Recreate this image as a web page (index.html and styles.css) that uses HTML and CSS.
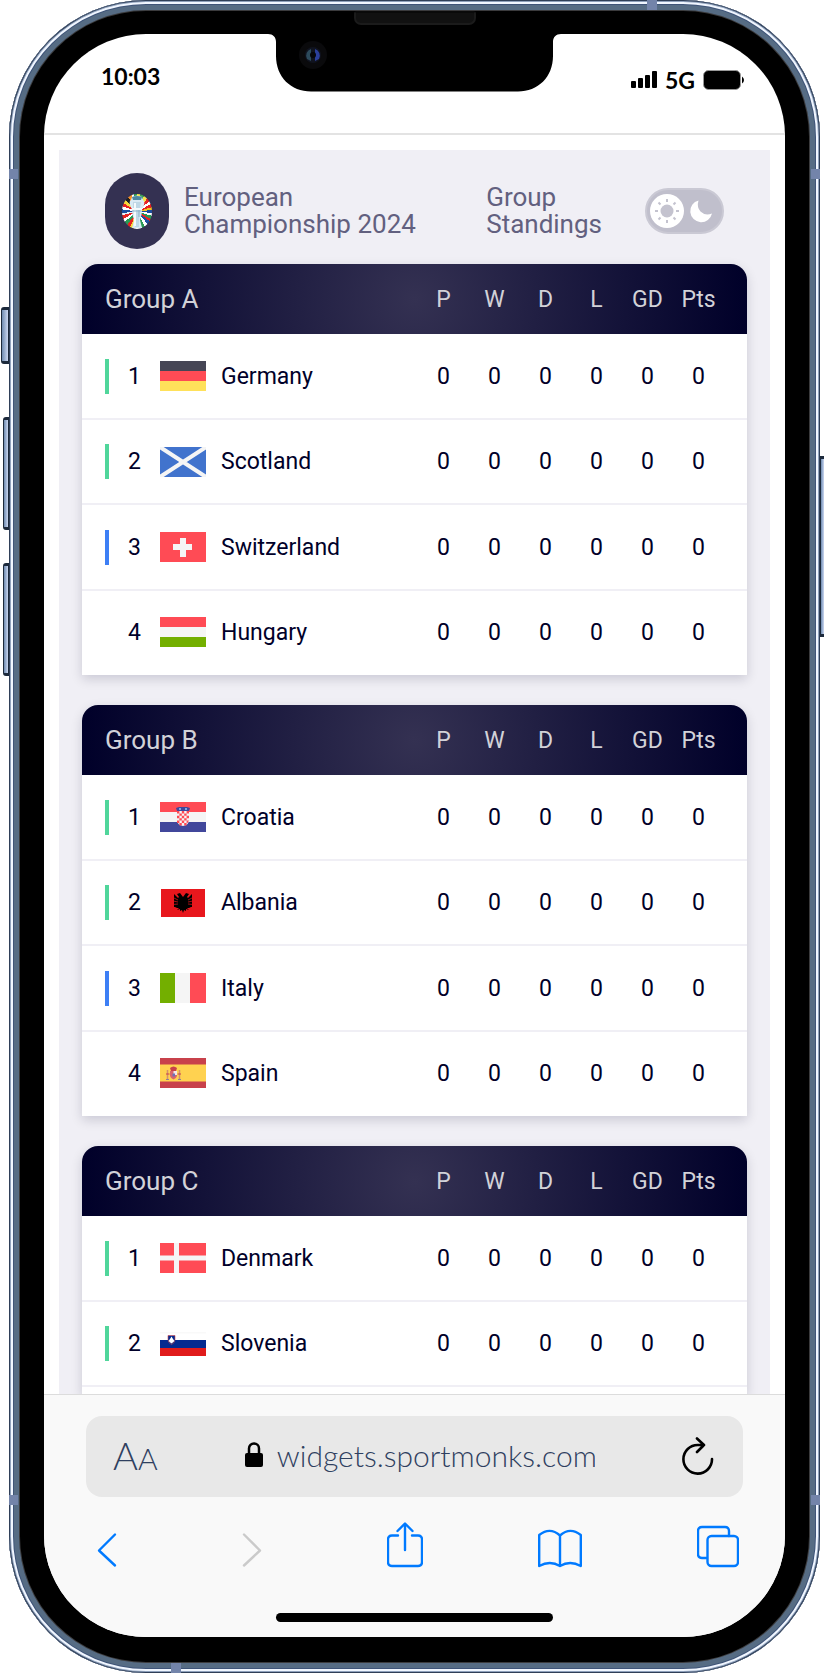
FILE: index.html
```html
<!DOCTYPE html>
<html lang="en">
<head>
    <meta charset="UTF-8">
    <meta name="viewport" content="width=device-width, initial-scale=1.0">
    <title>European Championship 2024 - Group Standings</title>
    <link rel="stylesheet" href="styles.css">
</head>
<body>
    <div class="phone">
        <!-- Side buttons and antenna lines -->
        <span class="side-button mute"></span>
        <span class="side-button volume-up"></span>
        <span class="side-button volume-down"></span>
        <span class="side-button power"></span>
        <span class="antenna antenna-tl"></span>
        <span class="antenna antenna-tr"></span>
        <span class="antenna antenna-bl"></span>
        <span class="antenna antenna-br"></span>
        <span class="antenna antenna-top"></span>
        <span class="antenna antenna-bottom"></span>
        <span class="speaker"></span>

        <div class="screen">
            <svg class="notch" width="293" height="58" viewBox="0 0 293 58">
                <path d="M0 0H293C288 0 285 3 285 8V22C285 43 270 57.500 250 57.500H43C23 57.500 8 43 8 22V8C8 3 5 0 0 0Z" fill="#000"/>
                <circle cx="45" cy="21" r="14" fill="#0a0a0c"/>
                <circle cx="45" cy="21" r="8" fill="#10131f"/>
                <path d="M43 15a7 7 0 0 0-4 10l4 2z" fill="#2c4a5c"/>
                <path d="M47 15a7 7 0 0 1 4 10l-4 2z" fill="#2a3f9c"/>
                <circle cx="45" cy="21" r="3" fill="#06070c"/>
            </svg>

            <div class="status-bar">
                <span class="time">10:03</span>
                <div class="status-icons">
                    <svg width="26" height="18" viewBox="0 0 26 18">
                        <rect x="0" y="10" width="5" height="7" rx="1"/>
                        <rect x="7" y="7" width="5" height="10" rx="1"/>
                        <rect x="14" y="4" width="5" height="13" rx="1"/>
                        <rect x="21" y="0" width="5" height="17" rx="1"/>
                    </svg>
                    <span class="network">5G</span>
                    <svg width="41" height="20" viewBox="0 0 41 20">
                        <rect x=".5" y=".5" width="37" height="19" rx="5" fill="#000" stroke="#999"/>
                        <path d="M39 6.500q2 1.500 2 3.500t-2 3.500z"/>
                    </svg>
                </div>
            </div>

            <main class="webview">
                <div class="widget">
                    <header class="widget-header">
                        <div class="crest">
                            <div class="crest-fan">
                                <svg width="30" height="35" viewBox="0 0 30 35">
                                    <path d="M10 3q5-3 10 0l1 3q2 1 1 5-1 3-2 4 0 6-2 11l2 8H10l2-8Q10 21 10 15q-1-1-2-4-1-4 1-5z" fill="#d9eaf4"/>
                                    <path d="M10 3q5-2 10 0l-1 3h-8z" fill="#4d86a2"/>
                                    <path d="M11 8h8l-1 6q0 5-1 11v8h-4v-8q-1-6-2-11z" fill="#bfd8e6"/>
                                    <path d="M13 9v23M10 15h10" stroke="#f4fafc" stroke-width="2"/>
                                    <path d="M17 16v7M10 17h9" stroke="#8fb3c8" stroke-width="1"/>
                                </svg>
                            </div>
                        </div>
                        <h1 class="title">European<br>Championship 2024</h1>
                        <h2 class="subtitle">Group<br>Standings</h2>
                        <label class="theme-switch">
                            <input type="checkbox" aria-label="Dark theme">
                            <svg width="75" height="42" viewBox="0 0 75 42">
                                <circle cx="20" cy="21" r="17" fill="#fff"/>
                                <circle cx="20" cy="21" r="6.500" fill="#c4c3cf"/>
                                <path d="M20 9v3M20 30v3M8 21h3M29 21h3M11.500 12.500l2 2M26.500 27.500l2 2M28.500 12.500l-2 2M13.500 27.500l-2 2" stroke="#c4c3cf" stroke-width="2"/>
                                <path d="M51.500 10.500A11 11 0 1 0 65 23.500Q58 26 53.500 21.500 49.500 17 51.500 10.500Z" fill="#fff"/>
                            </svg>
                        </label>
                    </header>

                    <section class="group">
                        <table class="standings">
                            <colgroup>
                                <col class="col-rank"><col><col class="col-stat" span="5"><col class="col-points">
                            </colgroup>
                            <thead>
                                <tr>
                                    <th class="group-name" colspan="2">Group A</th>
                                    <th>P</th><th>W</th><th>D</th><th>L</th><th>GD</th><th>Pts</th>
                                </tr>
                            </thead>
                            <tbody>
                                <tr>
                                    <td><span class="place qualified">1</span></td>
                                    <td><div class="team-info">
                                        <svg class="flag" viewBox="0 0 46 30"><path fill="#464655" d="M0 0h46v10H0z"/><path fill="#ff4b55" d="M0 10h46v10H0z"/><path fill="#ffe15a" d="M0 20h46v10H0z"/></svg>
                                        Germany</div></td>
                                    <td>0</td><td>0</td><td>0</td><td>0</td><td>0</td><td>0</td>
                                </tr>
                                <tr>
                                    <td><span class="place qualified">2</span></td>
                                    <td><div class="team-info">
                                        <svg class="flag" viewBox="0 0 46 30"><path fill="#4173cd" d="M0 0h46v30H0z"/><path stroke="#f5f5f5" stroke-width="4" d="M0 0l46 30M46 0L0 30"/></svg>
                                        Scotland</div></td>
                                    <td>0</td><td>0</td><td>0</td><td>0</td><td>0</td><td>0</td>
                                </tr>
                                <tr>
                                    <td><span class="place playoff">3</span></td>
                                    <td><div class="team-info">
                                        <svg class="flag" viewBox="0 0 46 30"><path fill="#ff4b55" d="M0 0h46v30H0z"/><path fill="#f5f5f5" d="M20 6h6v6h6v6h-6v7h-6v-7h-7v-6h7z"/></svg>
                                        Switzerland</div></td>
                                    <td>0</td><td>0</td><td>0</td><td>0</td><td>0</td><td>0</td>
                                </tr>
                                <tr>
                                    <td><span class="place">4</span></td>
                                    <td><div class="team-info">
                                        <svg class="flag" viewBox="0 0 46 30"><path fill="#ff4b55" d="M0 0h46v10H0z"/><path fill="#f5f5f5" d="M0 10h46v10H0z"/><path fill="#73af00" d="M0 20h46v10H0z"/></svg>
                                        Hungary</div></td>
                                    <td>0</td><td>0</td><td>0</td><td>0</td><td>0</td><td>0</td>
                                </tr>
                            </tbody>
                        </table>
                    </section>

                    <section class="group">
                        <table class="standings">
                            <colgroup>
                                <col class="col-rank"><col><col class="col-stat" span="5"><col class="col-points">
                            </colgroup>
                            <thead>
                                <tr>
                                    <th class="group-name" colspan="2">Group B</th>
                                    <th>P</th><th>W</th><th>D</th><th>L</th><th>GD</th><th>Pts</th>
                                </tr>
                            </thead>
                            <tbody>
                                <tr>
                                    <td><span class="place qualified">1</span></td>
                                    <td><div class="team-info">
                                        <svg class="flag" viewBox="0 0 46 30">
                                            <path fill="#ff4b55" d="M0 0h46v10H0z"/><path fill="#f5f5f5" d="M0 10h46v10H0z"/><path fill="#41479b" d="M0 20h46v10H0z"/>
                                            <path fill="#f5f5f5" d="M17 9h12v9q0 5-6 6-6-1-6-6z"/>
                                            <path fill="#ff4b55" d="M17 9h2.400v2.400H17zM21.800 9h2.400v2.400h-2.400zM26.600 9H29v2.400h-2.400zM19.400 11.400h2.400v2.400h-2.400zM24.200 11.400h2.400v2.400h-2.400zM17 13.800h2.400v2.400H17zM21.800 13.800h2.400v2.400h-2.400zM26.600 13.800H29v2.400h-2.400zM19.400 16.200h2.400v2.400h-2.400zM24.200 16.200h2.400v2.400h-2.400zM17 18.600h2.400v2.400H17zM21.800 18.600h2.400V21h-2.400zM26.600 18.600H29L27.500 21h-.9zM19.400 21h2.400v2.400h-2.400zM24.200 21h2.400v2.400h-2.400z"/>
                                            <path fill="#41479b" d="M16 6l3-1 4 0 4 0 3 1-1 3H17z"/><path fill="#7fa6e0" d="M19 6h2v2h-2zM25 6h2v2h-2z"/>
                                        </svg>
                                        Croatia</div></td>
                                    <td>0</td><td>0</td><td>0</td><td>0</td><td>0</td><td>0</td>
                                </tr>
                                <tr>
                                    <td><span class="place qualified">2</span></td>
                                    <td><div class="team-info">
                                        <svg class="flag" viewBox="0 0 46 30">
                                            <path fill="#e8171d" d="M1 1h44v28H1z"/>
                                            <path d="M23 9l-3-4-3 1 2 3-1 1-4-4v13l3 0-2 1h4l-2 2 3-1 0 2 2-1 1 3 1-3 2 1 0-2 3 1-2-2h4l-2-1h3V6l-4 4-1-1 2-3-3-1z"/>
                                            <path stroke="#e8171d" stroke-width=".7" d="M13 9.500l5 2.500M13 13l5 1M13 16.500l5-.5M33 9.500L28 12M33 13l-5 1M33 16.500l-5-.5"/>
                                        </svg>
                                        Albania</div></td>
                                    <td>0</td><td>0</td><td>0</td><td>0</td><td>0</td><td>0</td>
                                </tr>
                                <tr>
                                    <td><span class="place playoff">3</span></td>
                                    <td><div class="team-info">
                                        <svg class="flag" viewBox="0 0 46 30"><path fill="#73af00" d="M0 0h15v30H0z"/><path fill="#f5f5f5" d="M15 0h15v30H15z"/><path fill="#ff4b55" d="M30 0h16v30H30z"/></svg>
                                        Italy</div></td>
                                    <td>0</td><td>0</td><td>0</td><td>0</td><td>0</td><td>0</td>
                                </tr>
                                <tr>
                                    <td><span class="place">4</span></td>
                                    <td><div class="team-info">
                                        <svg class="flag" viewBox="0 0 46 30">
                                            <path fill="#c8414b" d="M0 0h46v30H0z"/><path fill="#ffd250" d="M0 6.500h46v17H0z"/>
                                            <path fill="#c8414b" d="M10 10q3.500-3 7 0l-1 3h-5z"/>
                                            <path fill="#d9656b" d="M10 13h7v5q-1 3-3.500 3.500Q11 21 10 18z"/>
                                            <path fill="#f5e6e6" d="M13.500 13H17v4h-3.500z"/><path fill="#6b72b8" d="M12.500 15.500h2.500v3h-2.500z"/>
                                            <path stroke="#d3906a" stroke-width="1.500" d="M7.500 12v9M19.500 12v9"/><path stroke="#8a7fa0" d="M6 21.500h3M18 21.500h3"/><path stroke="#c8414b" d="M6 16h3.500M17.500 16H21"/>
                                        </svg>
                                        Spain</div></td>
                                    <td>0</td><td>0</td><td>0</td><td>0</td><td>0</td><td>0</td>
                                </tr>
                            </tbody>
                        </table>
                    </section>

                    <section class="group group-open">
                        <table class="standings">
                            <colgroup>
                                <col class="col-rank"><col><col class="col-stat" span="5"><col class="col-points">
                            </colgroup>
                            <thead>
                                <tr>
                                    <th class="group-name" colspan="2">Group C</th>
                                    <th>P</th><th>W</th><th>D</th><th>L</th><th>GD</th><th>Pts</th>
                                </tr>
                            </thead>
                            <tbody>
                                <tr>
                                    <td><span class="place qualified">1</span></td>
                                    <td><div class="team-info">
                                        <svg class="flag" viewBox="0 0 46 30"><path fill="#ff4b55" d="M0 0h46v30H0z"/><path fill="#f5f5f5" d="M14 0h5v30h-5z"/><path fill="#f5f5f5" d="M0 12.500h46v5H0z"/></svg>
                                        Denmark</div></td>
                                    <td>0</td><td>0</td><td>0</td><td>0</td><td>0</td><td>0</td>
                                </tr>
                                <tr>
                                    <td><span class="place qualified">2</span></td>
                                    <td><div class="team-info">
                                        <svg class="flag" viewBox="0 0 46 30">
                                            <path fill="#f4f4f4" d="M0 3.500h46v1H0z"/><path fill="#fff" d="M0 4.500h46V11H0z"/><path fill="#042a8f" d="M0 11h46v8H0z"/><path fill="#e01b1b" d="M0 19h46v8H0z"/>
                                            <path fill="#042a8f" stroke="#d2464c" stroke-width=".6" d="M8 6.500h7v4q0 3.500-3.500 5Q8 14 8 10.500z"/><path fill="#fff" d="M8.500 12l1.500-2 1.500-2.500L13 10l1.500 2-3 2.500z"/>
                                        </svg>
                                        Slovenia</div></td>
                                    <td>0</td><td>0</td><td>0</td><td>0</td><td>0</td><td>0</td>
                                </tr>
                            </tbody>
                        </table>
                    </section>
                </div>
            </main>

            <footer class="browser-bar">
                <form class="address-bar">
                    <button type="button" class="text-size" aria-label="Text size"><span class="big">A</span><span class="small">A</span></button>
                    <div class="address">
                        <svg width="18" height="25" viewBox="0 0 18 25">
                            <path d="M4 12V6.500a5 5 0 0 1 10 0V12" fill="none" stroke="#000" stroke-width="2.500"/>
                            <rect x="0" y="11" width="18" height="14" rx="2"/>
                        </svg>
                        <input type="text" class="url" aria-label="Address" value="widgets.sportmonks.com">
                    </div>
                    <button type="button" aria-label="Reload">
                        <svg width="32" height="40" viewBox="0 0 32 40" fill="none" stroke="#000" stroke-width="2.600" stroke-linecap="round" stroke-linejoin="round">
                            <path d="M30 22A14.300 14.300 0 1 1 16 8H22M15 1.500l7 6.500-7 7"/>
                        </svg>
                    </button>
                </form>
                <nav class="nav-buttons">
                    <button type="button" aria-label="Back">
                        <svg width="30" height="46" viewBox="0 0 30 46"><path d="M18 12.500L2 28.500l16 15"/></svg>
                    </button>
                    <button type="button" class="forward" aria-label="Forward" disabled>
                        <svg width="30" height="46" viewBox="0 0 30 46"><path d="M2 12.500l16 16-16 15"/></svg>
                    </button>
                    <button type="button" aria-label="Share">
                        <svg width="36" height="46" viewBox="0 0 36 46"><path d="M11 13.500H5q-4 0-4 4V40q0 4 4 4h26q4 0 4-4V17.500q0-4-4-4h-6M18 28V2M10.500 9L18 1.500 25.500 9"/></svg>
                    </button>
                    <button type="button" aria-label="Bookmarks">
                        <svg width="44" height="46" viewBox="0 0 44 46"><path d="M22 13.500Q12 4.500 1.200 13V44Q12 38 22 44 32 38 42.800 44V13Q32 4.500 22 13.500ZM22 13.500V44"/></svg>
                    </button>
                    <button type="button" aria-label="Tabs">
                        <svg width="42" height="46" viewBox="0 0 42 46"><path d="M32 14V9q0-4-4-4H5Q1 5 1 9v23q0 4 4 4h5"/><rect x="10.500" y="14" width="30.500" height="30" rx="4"/></svg>
                    </button>
                </nav>
                <div class="home-indicator"></div>
            </footer>
        </div>
    </div>
</body>
</html>
```

FILE: styles.css
```css
* {
    box-sizing: border-box;
}
body {
    margin: 0;
    background-color: #fff;
    font-family: Roboto, sans-serif;
    color: #000029;
}
h1, h2 {
    margin: 0;
}
button {
    display: flex;
    background: none;
    border: none;
    padding: 0;
    cursor: pointer;
}
svg {
    display: block;
}

/* Phone body */
.phone {
    position: relative;
    display: flex;
    min-height: 100vh;
    margin: 0 4px 0 9px;
    padding: 34px 35px 36px;
    border-radius: 137px;
    background-color: #000;
    box-shadow: inset 0 0 0 1px #2f3f58, inset 0 0 0 2px #8fa1bc, inset 0 0 0 4px #f0f6ff, inset 0 0 0 5px #3f5478, inset 0 0 0 10px #566c84, inset 0 0 0 11px #3b3b3d;
}
.screen {
    position: relative;
    flex: 1;
    display: flex;
    flex-direction: column;
    min-width: 0;
    border-radius: 102px;
    background-color: #fff;
    overflow: hidden;
}
.notch {
    position: absolute;
    top: 0;
    left: 0;
    right: 0;
    margin: 0 auto;
}
.speaker {
    position: absolute;
    top: 11px;
    left: 0;
    right: 0;
    width: 122px;
    height: 14px;
    margin: 0 auto;
    border: 2px solid #1b1b1b;
    border-top-color: #0a0a0a;
    border-radius: 3px 3px 7px 7px;
    background-color: #111;
}
.side-button {
    position: absolute;
    left: -6px;
    width: 6px;
    height: 113px;
    border: 1px solid #1d2a3c;
    border-width: 3px 1px;
    border-radius: 3px 0 0 3px;
    background: linear-gradient(to right, #6f8bb0, #ccd8f2);
}
.mute {
    top: 307px;
    left: -8px;
    width: 8px;
    height: 57px;
}
.volume-up {
    top: 417px;
}
.volume-down {
    top: 563px;
}
.power {
    top: 456px;
    left: auto;
    right: -4px;
    width: 4px;
    height: 181px;
    border-right: none;
    border-radius: 0;
}
.antenna {
    position: absolute;
    width: 9px;
    height: 10px;
    background-color: #7384aa;
}
.antenna-tl {
    top: 169px;
    left: 0;
}
.antenna-tr {
    top: 169px;
    right: 0;
}
.antenna-bl {
    bottom: 168px;
    left: 0;
}
.antenna-br {
    bottom: 168px;
    right: 0;
}
.antenna-top {
    top: 0;
    right: 163px;
    width: 10px;
}
.antenna-bottom {
    bottom: 0;
    left: 162px;
    width: 10px;
}

/* Status bar */
.status-bar {
    display: flex;
    justify-content: space-between;
    align-items: flex-start;
    height: 101px;
    padding: 30px 41px 0 57px;
    border-bottom: 2px solid #e3e3e3;
    font-family: Lato, sans-serif;
    font-size: 23px;
    font-weight: bold;
    line-height: 24px;
    color: #000;
}
.status-icons {
    display: flex;
    align-items: center;
    gap: 8px;
    padding-top: 4px;
}

/* Widget */
.webview {
    flex: 1;
    display: flex;
    padding: 15px 15px 0;
}
.widget {
    flex: 1;
    display: flex;
    flex-direction: column;
    gap: 30px;
    padding: 23px 23px 0;
    background-color: #f0eff5;
}
.widget-header {
    display: flex;
    align-items: center;
    margin-bottom: -15px;
    padding: 0 23px;
}
.crest {
    display: flex;
    align-items: center;
    justify-content: center;
    width: 64px;
    height: 76px;
    margin-right: 15px;
    border-radius: 32px;
    background-color: #343152;
}
.crest-fan {
    border-radius: 50%;
    overflow: hidden;
    background: conic-gradient(#f6e04a 0 10deg, #3a9e54 10deg 24deg, #f5e14c 24deg 38deg, #e62222 38deg 50deg, #fff 50deg 62deg, #e62222 62deg 74deg, #f0c020 74deg 84deg, #1c4fa0 84deg 96deg, #fff 96deg 106deg, #2a9a55 106deg 118deg, #e62222 118deg 128deg, #1c4fa0 128deg 140deg, #fff 140deg 152deg, #2a9a55 152deg 164deg, #fff 164deg 190deg, #f6d93c 190deg 204deg, #e62222 204deg 216deg, #2a9a55 216deg 230deg, #fff 230deg 242deg, #e62222 242deg 256deg, #e8f0f8 256deg 264deg, #1c4fa0 264deg 278deg, #fff 278deg 290deg, #e62222 290deg 302deg, #f6d93c 302deg 316deg, #222 316deg 328deg, #f28c28 328deg 342deg, #fff 342deg 350deg, #2a9a55 350deg);
}
.title, .subtitle {
    font-size: 26px;
    font-weight: normal;
    line-height: 27px;
    color: #62607f;
}
.subtitle {
    margin-left: auto;
}
.theme-switch {
    margin-left: 43px;
    border: 2px solid #cac9d4;
    border-radius: 23px;
    background-color: #c0bfcc;
    cursor: pointer;
}
.theme-switch input {
    position: absolute;
    opacity: 0;
}

/* Group tables */
.group {
    border-radius: 16px 16px 0 0;
    background-color: #fff;
    box-shadow: 0 4px 12px rgba(0, 0, 41, 0.16);
    overflow: hidden;
}
.group-open {
    flex: 1;
    padding-bottom: 7px;
}
.standings {
    width: 100%;
    table-layout: fixed;
    border-collapse: separate;
    border-spacing: 0;
    font-size: 23px;
}
.col-rank {
    width: 78px;
}
.col-stat {
    width: 51px;
}
.col-points {
    width: 74px;
}
.standings thead {
    background: radial-gradient(circle at center, #343152, #000029);
}
.standings th {
    height: 70px;
    padding: 0;
    font-weight: normal;
    color: #d2d2d8;
}
.standings th:last-child, .standings td:last-child {
    padding-right: 23px;
}
.standings .group-name {
    padding-left: 23px;
    font-size: 26px;
    text-align: left;
}
.standings td {
    height: 86px;
    padding: 0;
    border-bottom: 2px solid #f0eff5;
    text-align: center;
}
.standings tr:nth-child(2) td {
    height: 85px;
}
.standings tr:nth-child(4) td {
    height: 84px;
    border-bottom-color: #fff;
}
.place {
    display: block;
    margin-left: 23px;
    padding-left: 19px;
    border-left: 4px solid transparent;
    line-height: 35px;
    text-align: left;
}
.place.qualified {
    border-color: #50d69b;
}
.place.playoff {
    border-color: #3d7ff5;
}
.team-info {
    display: flex;
    align-items: center;
    gap: 15px;
}
.flag {
    flex: none;
    width: 46px;
    height: 30px;
}

/* Browser bar */
.browser-bar {
    padding: 21px 42px 15px;
    border-top: 1px solid #dcdcdc;
    background-color: #f9f9f9;
}
.address-bar {
    display: flex;
    align-items: center;
    justify-content: space-between;
    height: 81px;
    padding: 0 29px 0 27px;
    border-radius: 16px;
    background-color: #e8e8e8;
}
.text-size {
    align-items: baseline;
    font-family: Lato, sans-serif;
    font-weight: 300;
    line-height: 44px;
    color: #2f4060;
}
.big {
    font-size: 38px;
}
.small {
    font-size: 30px;
}
.address {
    display: flex;
    align-items: center;
    gap: 14px;
    padding-bottom: 4px;
}
.url {
    width: 318px;
    padding: 0;
    border: none;
    background: none;
    font-family: Lato, sans-serif;
    font-size: 30px;
    font-weight: 300;
    color: #2f4060;
}
.nav-buttons {
    display: flex;
    justify-content: space-between;
    margin-top: 25px;
    padding: 0 4px 0 11px;
}
.nav-buttons svg {
    fill: none;
    stroke: #007aff;
    stroke-width: 2.4px;
    stroke-linecap: round;
    stroke-linejoin: round;
}
.nav-buttons .forward svg {
    stroke: #cacaca;
}
.home-indicator {
    width: 277px;
    height: 9px;
    margin: 45px auto 0;
    border-radius: 5px;
    background-color: #000;
}
```
